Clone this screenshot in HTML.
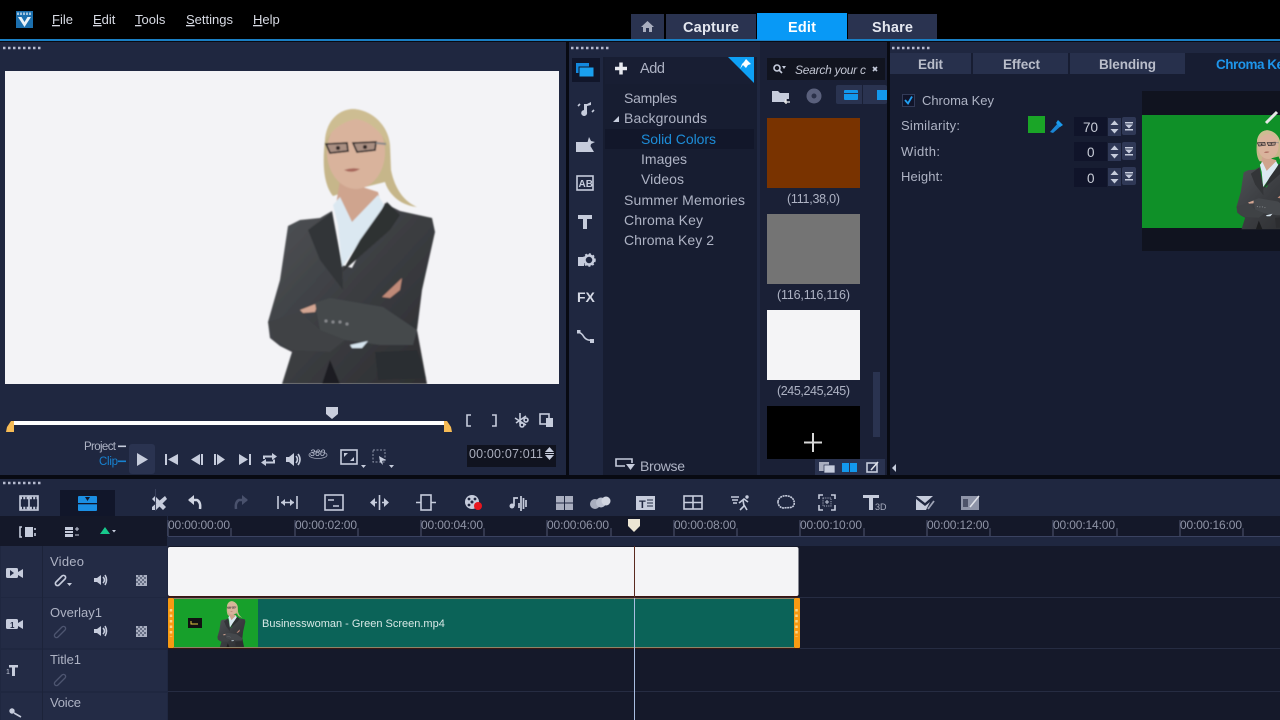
<!DOCTYPE html>
<html lang="en">
<head>
<meta charset="utf-8">
<title>VideoStudio</title>
<style>
html,body{margin:0;padding:0;background:#000;width:1280px;height:720px;overflow:hidden}
svg{display:block;filter:blur(.35px)}
text{font-family:"Liberation Sans",sans-serif;font-size:14px;fill:#aeb3c4}
.m{fill:#d8dbe4;font-size:13px}
.t{fill:#aeb3c4;font-size:14px}
.b{font-weight:bold;fill:#e4e7ef;font-size:14.5px}
.r{fill:#8f94a6;font-size:12px}
.i{fill:#c6ccdc;stroke:none}
.s{fill:none;stroke:#c6ccdc;stroke-width:1.6}
</style>
</head>
<body>
<svg width="1280" height="720" viewBox="0 0 1280 720" xmlns="http://www.w3.org/2000/svg">
<defs>
<linearGradient id="jk" x1="0" y1="0" x2="1" y2="1"><stop offset="0" stop-color="#505357"/><stop offset=".5" stop-color="#3b3d41"/><stop offset="1" stop-color="#2c2d30"/></linearGradient>
<filter id="sf" x="-10%" y="-10%" width="120%" height="120%"><feGaussianBlur stdDeviation=".8"/></filter>
<g id="woman">
<path d="M353 109C335 110 326 125 325 140C322 165 324 185 333 196L345 192L385 182C388 192 398 205 417 207C405 202 395 190 391 170L390 145C388 125 372 110 353 109Z" fill="#c6b68a"/>
<path d="M340 180L378 192L381 205L350 232L336 205Z" fill="#cfa48e"/>
<ellipse cx="356" cy="152" rx="29" ry="37" fill="#d9b39c"/>
<path d="M353 109C335 110 326 125 325 142C332 128 345 121 356 119C370 121 382 132 390 149C388 125 372 110 353 109Z" fill="#cdbd92"/>
<path d="M282 384L292 352L280 346L270 338L268 322L280 280L288 226L300 220L320 218L332 211L342 265L352 268L385 203L392 207L400 211L432 218L435 232L422 290L417 330L427 384Z" fill="url(#jk)"/>
<path d="M333 205L340 197L352 222L378 195L384 205L375 220L342 267L338 225Z" fill="#dbe8f1"/>
<path d="M332 212L308 230L320 260L343 290L342 265Z" fill="#333538"/>
<path d="M387 202L400 215L390 230L342 272L360 240Z" fill="#2e3033"/>
<path d="M382 297L402 278L400 290L390 298Z" fill="#c08a78"/>
<path d="M300 310L318 303L315 312L303 313Z" fill="#d3a592"/>
<path d="M315 303L330 298L383 307L417 330L413 345L380 345L345 340L320 330Z" fill="#45484c"/>
<path d="M268 322L300 312L320 330L345 340L330 352L292 350L275 340Z" fill="#3f4245"/>
<path d="M350 345L368 341L362 348L352 348Z" fill="#d8e6f0"/>
<path d="M375 352L417 350L426 378L378 380Z" fill="#2c2d30"/>
<path d="M330 360L340 384L322 384Z" fill="#1d1e20"/>
<circle cx="326" cy="321" r="1.500" fill="#8a8d90"/><circle cx="333" cy="322" r="1.500" fill="#8a8d90"/><circle cx="340" cy="322" r="1.500" fill="#8a8d90"/><circle cx="347" cy="324" r="1.500" fill="#8a8d90"/>
<path d="M326 144L347 143L348 151L330 153Z" fill="#a98f82" stroke="#1c1c20" stroke-width="1.600"/>
<path d="M353 143L376 142L375 150L357 152Z" fill="#a98f82" stroke="#1c1c20" stroke-width="1.600"/>
<circle cx="338" cy="148" r="2" fill="#2b2222"/><circle cx="365" cy="147" r="2" fill="#2b2222"/>
<path d="M376 143L386 144" stroke="#888" stroke-width="2"/>
<path d="M344 170Q352 167 360 169Q352 174 344 170Z" fill="#a8675c"/>
</g>
</defs>
<rect width="1280" height="720" fill="#080a12"/>
<rect width="1280" height="39" fill="#000"/>
<rect y="39" width="1280" height="2" fill="#1a7fc4"/>

<!-- logo -->
<rect x="16" y="11" width="17" height="17" fill="#1b6fae"/>
<path d="M18 17L24.500 27L31 17H27.500L24.500 22L21.500 17Z" fill="#eaf2f8"/>
<path d="M18 12.500V15M21 12.500V15M24 12.500V15M27 12.500V15M30 12.500V15" stroke="#eaf2f8" stroke-width="1.300"/>

<text class="m" x="52" y="24"><tspan text-decoration="underline">F</tspan>ile</text>
<text class="m" x="93" y="24"><tspan text-decoration="underline">E</tspan>dit</text>
<text class="m" x="135" y="24"><tspan text-decoration="underline">T</tspan>ools</text>
<text class="m" x="186" y="24"><tspan text-decoration="underline">S</tspan>ettings</text>
<text class="m" x="253" y="24"><tspan text-decoration="underline">H</tspan>elp</text>

<!-- main tabs -->
<rect x="631" y="14" width="33" height="25" fill="#2a3350"/>
<rect x="666" y="14" width="90" height="25" fill="#2a3350"/>
<rect x="757" y="13" width="90" height="27" fill="#0899f6"/>
<rect x="848" y="14" width="89" height="25" fill="#2a3350"/>
<path d="M641 27L647.500 21L654 27H652V32H649V28H646V32H643V27Z" fill="#a9aebf"/>
<text class="b" x="683" y="32" textLength="56">Capture</text>
<text class="b" x="788" y="32" textLength="28" style="fill:#fff">Edit</text>
<text class="b" x="872" y="32" textLength="41">Share</text>

<!-- panels -->
<rect x="0" y="42" width="566" height="433" fill="#1f2740"/>
<rect x="569" y="42" width="318" height="433" fill="#1f2740"/>
<rect x="890" y="42" width="390" height="433" fill="#171d32"/>
<rect x="890" y="42" width="390" height="11" fill="#1f2740"/>
<rect x="0" y="479" width="1280" height="241" fill="#1f2740"/>
<g stroke="#b5bace" stroke-width="2.500" stroke-dasharray="2.500 2.500">
<line x1="3" y1="48" x2="42" y2="48"/><line x1="571" y1="48" x2="609" y2="48"/><line x1="892" y1="48" x2="930" y2="48"/><line x1="3" y1="483" x2="42" y2="483"/>
</g>

<!-- preview -->
<rect x="5" y="71" width="554" height="313" fill="#f3f3f6"/>
<svg x="5" y="71" width="554" height="313" viewBox="5 71 554 313" style="filter:none"><use href="#woman" filter="url(#sf)"/></svg>

<!-- scrubber -->
<rect x="12" y="421" width="435" height="4" fill="#fff"/>
<path d="M6 432L7 427L11 421H14V432Z" fill="#f6bb55"/>
<path d="M452 432L451 427L447 421H444V432Z" fill="#f6bb55"/>
<path d="M326 407H338V414L332 419L326 414Z" fill="#c9cedd"/>
<path class="s" d="M471 415H467V426H471M492 415H496V426H492"/>
<path class="s" d="M520 413V424M515 418L526 425M526 416L516 423" stroke-width="1.300"/><circle class="s" cx="522" cy="425" r="2"/><circle class="s" cx="526" cy="420" r="2"/>
<rect class="s" x="540" y="414" width="9" height="10"/><rect x="546" y="418" width="7" height="9" fill="#c6ccdc"/>

<text class="t" x="84" y="450" textLength="32" style="font-size:11.500px">Project</text>
<rect x="118" y="445.500" width="8" height="1.600" fill="#c6ccdc"/>
<text x="99" y="465" textLength="19" style="font-size:11.500px;fill:#1782d0">Clip</text>
<rect x="118" y="460.500" width="8" height="1.600" fill="#1782d0"/>
<rect x="129" y="444" width="26" height="30" rx="3" fill="#2a3350"/>
<path class="i" d="M137 448L148 454.500L137 461Z" transform="translate(0 5)"/>
<path class="i" d="M165 454H167V465H165ZM178 454V465L168 459.500Z"/>
<path class="i" d="M200 454V465L191 459.500ZM201 454H203V465H201Z"/>
<path class="i" d="M214 454H216V465H214ZM217 454V465L225 459.500Z"/>
<path class="i" d="M239 454V465L248 459.500ZM249 454H251V465H249Z"/>
<path d="M264 459V456.500H274M274 459.500V462.500H264" fill="none" stroke="#c6ccdc" stroke-width="2"/><path class="i" d="M272 453L277 456.500L272 460ZM266 459L261 462.500L266 466Z"/>
<path class="i" d="M286 457H289L294 453V466L289 462H286Z"/><path class="s" d="M296 456Q299 459.500 296 463M298 454Q302 459.500 298 465" stroke-width="1"/>
<text x="310" y="456" style="font-size:9px;font-style:italic;fill:#c6ccdc">360</text><ellipse cx="318" cy="455" rx="9" ry="3.500" fill="none" stroke="#9ea4b6" stroke-width=".8"/>
<rect class="s" x="341" y="450" width="16" height="14"/><path class="i" d="M344 453H348L344 457ZM354 461H350L354 457Z"/><path class="i" d="M361 465H366L363.500 468Z"/>
<rect x="373" y="450" width="12" height="12" fill="none" stroke="#8e94a8" stroke-dasharray="2 1.500"/><path class="i" d="M379 456L386 460L382 461L383 465L380 462Z"/><path class="i" d="M389 465H394L391.500 468Z"/>
<rect x="467" y="445" width="89" height="22" fill="#10131f"/>
<text x="469" y="458" textLength="74" style="font-size:12.500px;fill:#a9adbc">00:00:07:011</text>
<path class="i" d="M545 452L549.500 447L554 452ZM545 455H554L549.500 460Z"/><rect x="545" y="453" width="9" height="1" fill="#c6ccdc"/>

<!-- library -->
<rect x="603" y="57" width="154" height="418" fill="#171d31"/>
<rect x="760" y="42" width="127" height="433" fill="#1a2036"/>
<rect x="605" y="57" width="150" height="27" fill="#181e33"/>
<rect x="572" y="58" width="28" height="24" fill="#11162a"/>
<rect x="576" y="63" width="13" height="10" fill="#1289de"/><rect x="579" y="67" width="15" height="10" fill="#1aa0ee" stroke="#11162a"/>
<path d="M621 62.500V74.500M615 68.500H627" stroke="#e8eaf0" stroke-width="3.500"/>
<text class="t" x="640" y="73" textLength="25" style="font-size:14.500px">Add</text>
<path d="M728 57H754V83Z" fill="#0ea0f5"/>
<path d="M746 59L751 64L748 65L746 68L743 65L740 69L742 64L744 62Z" fill="#fff"/>
<rect x="605" y="129" width="149" height="20" fill="#12172a"/>
<path d="M613 122L619 116V122Z" fill="#c6ccdc"/>
<text class="t" x="624" y="103" textLength="53">Samples</text>
<text class="t" x="624" y="123" textLength="83">Backgrounds</text>
<text x="641" y="144" textLength="75" style="fill:#1d8dd8">Solid Colors</text>
<text class="t" x="641" y="164" textLength="46">Images</text>
<text class="t" x="641" y="184" textLength="43">Videos</text>
<text class="t" x="624" y="205" textLength="121">Summer Memories</text>
<text class="t" x="624" y="225" textLength="79">Chroma Key</text>
<text class="t" x="624" y="245" textLength="90">Chroma Key 2</text>
<text class="t" x="640" y="471" textLength="45">Browse</text>
<path class="s" d="M625 466H616V459H632V463" stroke-width="1.600"/><path class="i" d="M626 464H635L630.500 470Z"/>
<!-- strip icons -->
<path class="i" d="M584 104H587L591 102V105L587 106V112A3 3 0 1 1 584 110Z"/><path class="s" d="M578 106L580 104M592 112L594 110" stroke-width="1.300"/>
<path class="i" d="M576 142H588L594 152H576Z"/><path class="i" d="M589 137L591 141L595 142L591 144L590 148L587 144Z"/>
<rect class="s" x="577" y="176" width="16" height="14"/><text x="578.500" y="187" style="font-size:10px;font-weight:bold;fill:#c6ccdc">AB</text>
<path class="i" d="M578 215H592V219H587V229H583V219H578Z"/>
<path class="i" d="M578 257H584V266H578Z"/><circle cx="589" cy="260" r="4.500" fill="none" stroke="#c6ccdc" stroke-width="2.500"/><circle cx="589" cy="260" r="6" fill="none" stroke="#c6ccdc" stroke-width="1.500" stroke-dasharray="2 2"/>
<text x="577" y="302" style="font-size:14px;font-weight:bold;fill:#d5d9e5">FX</text>
<path class="s" d="M578 332Q582 333 584 337Q587 341 592 340" stroke-width="1.800"/><rect x="577" y="330" width="3.500" height="3.500" fill="#c6ccdc"/><rect x="590" y="339" width="4" height="4" fill="#c6ccdc"/>

<!-- search -->
<rect x="767" y="58" width="118" height="22" fill="#11141f"/>
<circle class="s" cx="777" cy="68" r="3" stroke-width="1.200"/><path class="s" d="M779 70L782 73" stroke-width="1.200"/><path class="i" d="M782 66H786L784 69Z"/>
<text x="795" y="74" textLength="71" style="font-size:12px;font-style:italic;fill:#c2c6d3">Search your c</text>
<path class="s" d="M873 67L877 71M877 67L873 71" stroke-width="1.100"/>
<path class="i" d="M772 91H778L780 93H789V99H786V102H772Z"/><path d="M786 99V104M784 102H790" stroke="#eee" stroke-width="1.300"/>
<circle cx="814" cy="96" r="7.500" fill="#5a607c"/><circle cx="814" cy="96" r="2.500" fill="#2b3149"/>
<rect x="836" y="85" width="51" height="19" rx="2" fill="#2a3350"/><rect x="862" y="85" width="1" height="19" fill="#1a2036"/>
<rect x="844" y="90" width="14" height="10" rx="1" fill="#1398ec"/><rect x="844" y="93" width="14" height="1" fill="#2a3350"/>
<path d="M877 90H887V100H877Z" fill="#1398ec"/>
<rect x="767" y="118" width="93" height="70" fill="#793300"/>
<rect x="767" y="214" width="93" height="70" fill="#747474"/>
<rect x="767" y="310" width="93" height="70" fill="#f4f4f6"/>
<rect x="767" y="406" width="93" height="53" fill="#000"/>
<path d="M813 433V452M804 442.500H822" stroke="#d8d8d8" stroke-width="2"/>
<text class="t" x="787" y="203" textLength="53" style="font-size:12.500px">(111,38,0)</text>
<text class="t" x="777" y="299" textLength="73" style="font-size:12.500px">(116,116,116)</text>
<text class="t" x="777" y="395" textLength="73" style="font-size:12.500px">(245,245,245)</text>
<rect x="873" y="372" width="7" height="65" fill="#2a3350"/>
<rect x="815" y="459" width="70" height="16" fill="#2a3350"/>
<rect x="819" y="462" width="10" height="9" fill="#a9aebf"/><rect x="824" y="465" width="11" height="8" fill="#c6ccdc" stroke="#2a3350" stroke-width=".7"/>
<rect x="842" y="463" width="15" height="9" fill="#1398ec"/><rect x="849" y="463" width="1" height="9" fill="#2a3350"/>
<rect class="s" x="867" y="463" width="10" height="9" stroke-width="1.100"/><path d="M871 470L878 462" stroke="#e0e3ea" stroke-width="1.500"/>
<path class="i" d="M892 468L896 464V472Z"/>

<!-- options -->
<rect x="890" y="53" width="81" height="21" fill="#27304c"/>
<rect x="973" y="53" width="95" height="21" fill="#27304c"/>
<rect x="1070" y="53" width="115" height="21" fill="#27304c"/>
<text class="b" x="918" y="69" textLength="25" style="font-size:13.500px;fill:#b9bdca">Edit</text>
<text class="b" x="1003" y="69" textLength="37" style="font-size:13.500px;fill:#b9bdca">Effect</text>
<text class="b" x="1099" y="69" textLength="57" style="font-size:13.500px;fill:#b9bdca">Blending</text>
<text class="b" x="1216" y="69" textLength="68" style="font-size:13.500px;fill:#1e95ea">Chroma Ke</text>
<rect x="902.500" y="94.500" width="12" height="12" fill="#10142a" stroke="#333b58"/>
<path d="M905 100L908 103.500L912 96.500" fill="none" stroke="#22a0f2" stroke-width="1.800"/>
<text class="t" x="922" y="105" textLength="72" style="font-size:13px">Chroma Key</text>
<text class="t" x="901" y="130" textLength="59" style="font-size:13px">Similarity:</text>
<text class="t" x="901" y="156" textLength="39" style="font-size:13px">Width:</text>
<text class="t" x="901" y="181" textLength="42" style="font-size:13px">Height:</text>
<rect x="1028" y="116" width="17" height="17" fill="#1aa527"/>
<path d="M1050 132L1058 123L1061 126L1053 133Z" fill="#1a86d6"/><path d="M1058 120L1063 125L1060 127L1056 123Z" fill="#1a9bee"/>
<rect x="1074" y="117" width="33" height="19" fill="#10142a"/><rect x="1074" y="142" width="33" height="19" fill="#10142a"/><rect x="1074" y="168" width="33" height="19" fill="#10142a"/>
<rect x="1108" y="118" width="13" height="18" fill="#2f3856"/><rect x="1108" y="143" width="13" height="18" fill="#2f3856"/><rect x="1108" y="168" width="13" height="18" fill="#2f3856"/>
<rect x="1122" y="117" width="14" height="18" rx="2" fill="#2f3856"/><rect x="1122" y="142" width="14" height="18" rx="2" fill="#2f3856"/><rect x="1122" y="167" width="14" height="18" rx="2" fill="#2f3856"/>
<path class="i" d="M1110.500 125L1114.500 120.500L1118.500 125ZM1110.500 129H1118.500L1114.500 133.500Z"/>
<path class="i" d="M1110.500 150L1114.500 145.500L1118.500 150ZM1110.500 154H1118.500L1114.500 158.500Z"/>
<path class="i" d="M1110.500 175L1114.500 170.500L1118.500 175ZM1110.500 179H1118.500L1114.500 183.500Z"/>
<path class="i" d="M1125 122H1133V123.500H1125ZM1125 124.500H1133L1129 128.500ZM1125 129H1133V130.500H1125Z"/>
<path class="i" d="M1125 147H1133V148.500H1125ZM1125 149.500H1133L1129 153.500ZM1125 154H1133V155.500H1125Z"/>
<path class="i" d="M1125 172H1133V173.500H1125ZM1125 174.500H1133L1129 178.500ZM1125 179H1133V180.500H1125Z"/>
<text x="1083" y="132" textLength="15" style="font-size:13.500px;fill:#c9cdd8">70</text>
<text x="1087" y="157" style="font-size:13.500px;fill:#c9cdd8">0</text>
<text x="1087" y="183" style="font-size:13.500px;fill:#c9cdd8">0</text>
<rect x="1142" y="91" width="138" height="160" fill="#10131f"/>
<rect x="1142" y="115" width="138" height="113" fill="#0f9028"/>
<use href="#woman" transform="translate(1140 91) scale(.36)"/>
<path d="M1266 123L1277 112" stroke="#e6e6e6" stroke-width="3"/>

<!-- timeline toolbar -->
<rect x="60" y="490" width="55" height="26" fill="#11162a"/>
<rect class="s" x="20" y="496" width="18" height="14"/><path class="s" d="M29 496V510"/><path d="M20 498H38M20 508H38" stroke="#c6ccdc" stroke-width="2.500" stroke-dasharray="2 1.300"/>
<rect x="78" y="496" width="19" height="15" rx="1" fill="#1b8fe4"/><rect x="78" y="503" width="19" height="1.300" fill="#11162a"/><path d="M85 497H90L87.500 501Z" fill="#11162a"/>
<path class="i" d="M152 499L155 496L166 507L163 510ZM165 496L167 499L156 510L152 510L152 507Z"/>
<path d="M189 500H197Q201 502 200 509" fill="none" stroke="#d0d5e2" stroke-width="2.500"/><path d="M194 495L188 500L194 505Z" fill="#d0d5e2"/>
<path d="M247 500H239Q235 502 236 509" fill="none" stroke="#49516c" stroke-width="2.500"/><path d="M242 495L248 500L242 505Z" fill="#49516c"/>
<path class="s" d="M278 496V509M297 496V509M281 502.500H294"/><path class="i" d="M281 502.500L285 499V506ZM294 502.500L290 499V506Z"/>
<rect class="s" x="325" y="495" width="18" height="15"/><path class="s" d="M328 500H334M339 506H333" stroke-width="1.200"/>
<path class="s" d="M379.500 495V510M372 502.500H377M382 502.500H388"/><path class="i" d="M370 502.500L375 498V507ZM389 502.500L384 498V507Z"/>
<rect class="s" x="421" y="495" width="10" height="15"/><path class="s" d="M416 502.500H421M431 502.500H436"/>
<circle cx="472" cy="502" r="7" fill="#c6ccdc"/><circle cx="472" cy="502" r="1.500" fill="#1f2740"/><circle cx="469" cy="499" r="1.400" fill="#1f2740"/><circle cx="475" cy="499" r="1.400" fill="#1f2740"/><circle cx="469" cy="505" r="1.400" fill="#1f2740"/><circle cx="478" cy="506" r="4" fill="#e8161e"/>
<circle cx="512" cy="506" r="2.500" fill="#c6ccdc"/><path d="M514 506V498H518M519 503V508M521 496V511M523.500 498V509M526 500V507" stroke="#c6ccdc" stroke-width="1.700" fill="none"/>
<rect x="556" y="496" width="17" height="14" fill="#a9aebf"/><path d="M556 503H573M564.500 496V510" stroke="#1f2740"/>
<circle cx="595" cy="504" r="5" fill="#a9aebf"/><circle cx="601" cy="502.500" r="5" fill="#bcc1d0"/><circle cx="606" cy="501" r="4.500" fill="#d1d5e0"/>
<rect x="636" y="496" width="19" height="14" fill="#c6ccdc"/><text x="639" y="508" style="font-size:11px;font-weight:bold;fill:#1f2740">T</text><path d="M647 500H653M647 503H653M647 506H653" stroke="#1f2740"/>
<rect class="s" x="684" y="496" width="18" height="13"/><path class="s" d="M684 502.500H702M693 496V509"/>
<path class="s" d="M731 497H739M732 500H738M733 503H737" stroke-width="1.100"/><path class="s" d="M739 503L744 499L748 502M743 500L744 506L740 510M744 505L747 510" stroke-width="1.800"/><circle cx="747" cy="497" r="1.700" fill="#c6ccdc"/>
<path class="s" d="M778 502C778 497 784 495 788 496C793 497 795 501 794 505C792 509 787 507 784 508C780 508 778 505 778 502Z" stroke-dasharray="2 .6"/>
<path class="s" d="M819 499V495H823M831 495H835V499M819 505V510H823M831 510H835V505" stroke-width="1.500"/><rect x="823" y="498" width="8" height="8" fill="none" stroke="#9ea4b6" stroke-dasharray="1.200 1"/><path d="M827 500V504M825 502H829" stroke="#c6ccdc"/>
<path class="i" d="M863 495H879V498H873V510H869V498H863Z"/><text x="875" y="510" style="font-size:9px;fill:#a9aebf">3D</text>
<path class="i" d="M916 496H933L925 503ZM916 499L925 506L930 502L926 510H916Z"/><path d="M928 509L934 501" stroke="#9ea4b6" stroke-width="1.800"/>
<rect x="961" y="496" width="18" height="14" fill="#8e94a8"/><rect x="963" y="499" width="5" height="8" fill="#1f2740" opacity=".6"/><path d="M970 507L979 496" stroke="#e0e3ea" stroke-width="1.500"/>
<rect x="155" y="489" width="1" height="22" fill="#39415c"/>

<!-- ruler -->
<rect x="0" y="516" width="1280" height="30" fill="#1f2740"/>
<rect x="0" y="516" width="167" height="30" fill="#141829"/>
<rect x="168" y="516" width="1112" height="21" fill="#141829"/>
<rect x="168" y="536" width="1112" height="1" fill="#3a4260"/>
<text class="r" x="168" y="529" textLength="62">00:00:00:00</text>
<text class="r" x="295" y="529" textLength="62">00:00:02:00</text>
<text class="r" x="421" y="529" textLength="62">00:00:04:00</text>
<text class="r" x="547" y="529" textLength="62">00:00:06:00</text>
<text class="r" x="674" y="529" textLength="62">00:00:08:00</text>
<text class="r" x="800" y="529" textLength="62">00:00:10:00</text>
<text class="r" x="927" y="529" textLength="62">00:00:12:00</text>
<text class="r" x="1053" y="529" textLength="62">00:00:14:00</text>
<text class="r" x="1180" y="529" textLength="62">00:00:16:00</text>
<path d="M168 520V536M231 528V536M295 520V536M358 528V536M421 520V536M484 528V536M547 520V536M611 528V536M674 520V536M737 528V536M800 520V536M864 528V536M927 520V536M990 528V536M1053 520V536M1117 528V536M1180 520V536M1243 528V536" stroke="#4f5671"/>
<path d="M628 519H640V526L634 532L628 526Z" fill="#ece6d4"/>
<rect x="25" y="527" width="8" height="10" fill="#c6ccdc"/><path class="s" d="M22 527H20V537H22M35 528V530M35 533V536" stroke-width="1.200"/>
<rect x="65" y="527" width="8" height="10" fill="#c6ccdc"/><path d="M65 530.500H73M65 533.500H73" stroke="#141829"/><path d="M75 529H79M77 527V531M75 535H79" stroke="#c6ccdc"/>
<path d="M100 534L105 527L110 534Z" fill="#17c98c"/><path class="i" d="M112 530H116L114 532.500Z"/>

<!-- tracks -->
<rect x="168" y="546" width="1112" height="174" fill="#15192a"/>
<path d="M168 597.500H1280M168 648.500H1280M168 691.500H1280" stroke="#262c42"/>
<rect x="1" y="546" width="166" height="51" fill="#232b45"/>
<rect x="1" y="598" width="166" height="50" fill="#232b45"/>
<rect x="1" y="650" width="166" height="41" fill="#232b45"/>
<rect x="1" y="693" width="166" height="27" fill="#232b45"/>
<rect x="42" y="546" width="1" height="174" fill="#1c2339"/>
<text class="t" x="50" y="566" textLength="34" style="font-size:13px">Video</text>
<text class="t" x="50" y="617" textLength="52" style="font-size:13px">Overlay1</text>
<text class="t" x="50" y="664" textLength="31" style="font-size:13px">Title1</text>
<text class="t" x="50" y="707" textLength="31" style="font-size:13px">Voice</text>
<rect x="6" y="568" width="12" height="10" rx="1.500" fill="#c6ccdc"/><path d="M18 572L23 569V578L18 575Z" fill="#c6ccdc"/><path d="M10 570L14 573L10 576Z" fill="#232b45"/>
<rect x="6" y="619" width="12" height="10" rx="1.500" fill="#c6ccdc"/><path d="M18 623L23 620V629L18 626Z" fill="#c6ccdc"/><text x="10" y="628" style="font-size:8px;font-weight:bold;fill:#232b45">1</text>
<text x="6" y="674" style="font-size:7px;fill:#c6ccdc">1</text>
<path class="i" d="M9 665H18V667.500H15V676H12V667.500H9Z"/>
<circle cx="12" cy="711" r="2.700" fill="#c6ccdc"/><path class="s" d="M14 713L21 717"/>
<path class="s" d="M56 582L62 576A2 2 0 0 1 65 579L59 585A2 2 0 0 1 56 582Z" stroke-width="1.300"/><path class="i" d="M67 583H72L69.500 586Z"/>
<path d="M55 634L62 627A2 2 0 0 1 65 630L58 637A2 2 0 0 1 55 634Z" fill="none" stroke="#4d5570" stroke-width="1.300"/>
<path d="M55 682L62 675A2 2 0 0 1 65 678L58 685A2 2 0 0 1 55 682Z" fill="none" stroke="#4d5570" stroke-width="1.300"/>
<path class="i" d="M94 578H97L101 575V585L97 582H94Z"/><path class="s" d="M103 577Q106 580 103 583M105 575Q108 580 105 585" stroke-width=".9"/>
<path class="i" d="M94 629H97L101 626V636L97 633H94Z"/><path class="s" d="M103 628Q106 631 103 634M105 626Q108 631 105 636" stroke-width=".9"/>
<rect x="136" y="575" width="11" height="11" fill="#aab0c2"/><path d="M136 578H147M136 582H147M139 575V586M143 575V586" stroke="#232b45" stroke-dasharray="2 2"/>
<rect x="136" y="626" width="11" height="11" fill="#aab0c2"/><path d="M136 629H147M136 633H147M139 626V637M143 626V637" stroke="#232b45" stroke-dasharray="2 2"/>

<!-- clips -->
<rect x="168" y="547" width="630.500" height="49" rx="2" fill="#f4f4f6"/>
<rect x="168" y="596" width="630" height="1.500" fill="#3a1510"/>
<rect x="168" y="598" width="632" height="50" rx="2" fill="#0b6358"/>
<rect x="174" y="599" width="84" height="48" fill="#17a02b"/>
<use href="#woman" transform="translate(172.700 583) scale(.167)"/>
<rect x="188" y="618" width="14" height="10" fill="#111"/><path d="M191 621V624H198" stroke="#e4c93f" fill="none"/>
<rect x="168" y="598" width="6" height="50" rx="1" fill="#f79a13"/>
<rect x="794" y="598" width="6" height="50" rx="1" fill="#f79a13"/>
<path d="M171 609V637M796.500 609V637" stroke="#f9d586" stroke-width="2.500" stroke-dasharray="2.500 3"/>
<rect x="174" y="598" width="620" height="1" fill="#8f8368"/><rect x="174" y="647" width="620" height="1" fill="#8f8368"/>
<rect x="168" y="648" width="632" height="1" fill="#3a1510"/>
<text x="262" y="627" style="font-size:11px;fill:#d8e8e6">Businesswoman - Green Screen.mp4</text>
<rect x="634" y="546" width="1" height="52" fill="#5a2a20"/>
<rect x="634" y="598" width="1" height="122" fill="#a8bde0"/>
</svg>
</body>
</html>
